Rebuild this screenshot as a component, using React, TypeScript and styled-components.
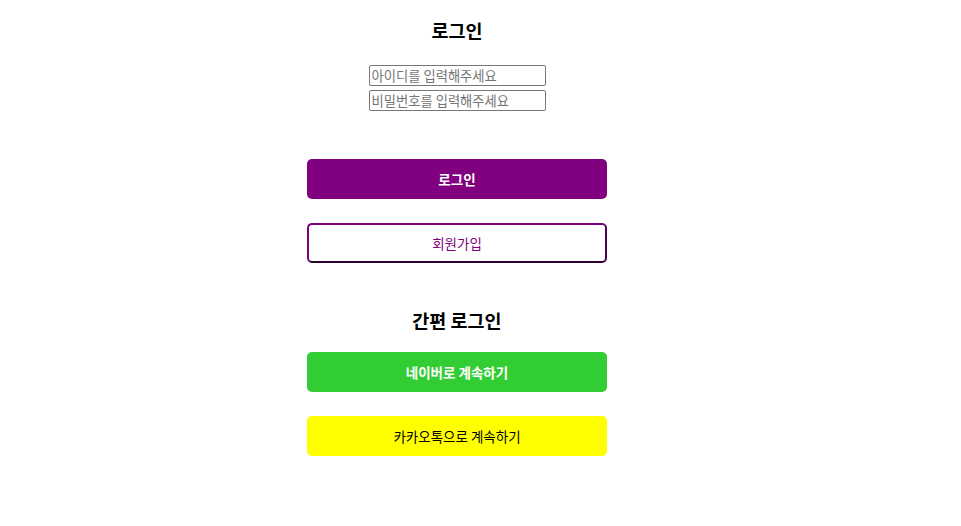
import styled, { createGlobalStyle } from "styled-components";

const GlobalStyle = createGlobalStyle`
  * { box-sizing: border-box; }
  body {
    margin: 0;
    background: #ffffff;
    font-family: "Noto Sans CJK KR", "Noto Sans", sans-serif;
  }
`;

const Page = styled.main`
  display: flex;
  flex-direction: column;
  align-items: center;
  padding-top: 17px;
  width: 914px;
`;

const Title = styled.h3<{ $top?: number }>`
  margin: ${(p) => p.$top ?? 0}px 0 0;
  height: 27px;
  line-height: 27px;
  font-size: 18.5px;
  font-weight: 700;
  color: #000;
`;

const Form = styled.form`
  display: flex;
  flex-direction: column;
  align-items: center;
  gap: 4px;
  margin-top: 21px;
`;

const Input = styled.input`
  width: 177px;
  height: 21px;
  padding: 0 2px;
  border: 1px solid #767676;
  border-radius: 2px;
  font-family: inherit;
  font-size: 13.3px;
  color: #000;
  &::placeholder { color: #757575; }
`;

const Button = styled.button<{ $bg: string; $fg: string; $top: number; $bold?: boolean; $outline?: boolean }>`
  width: 300px;
  height: 40px;
  margin-top: ${(p) => p.$top}px;
  border-radius: 5px;
  border: ${(p) => (p.$outline ? "2px solid #800080" : "none")};
  border-bottom-color: ${(p) => (p.$outline ? "#2e0033" : "transparent")};
  border-right-color: ${(p) => (p.$outline ? "#4a0050" : "transparent")};
  background: ${(p) => p.$bg};
  color: ${(p) => p.$fg};
  font-family: inherit;
  font-size: 13.5px;
  font-weight: ${(p) => (p.$bold ? 700 : 400)};
  cursor: pointer;
`;

export default function App() {
  return (
    <>
      <GlobalStyle />
      <Page>
        <Title>로그인</Title>
        <Form>
          <Input placeholder="아이디를 입력해주세요" />
          <Input type="password" placeholder="비밀번호를 입력해주세요" />
        </Form>
        <Button $bg="#800080" $fg="#ffffff" $top={48} $bold>로그인</Button>
        <Button $bg="#ffffff" $fg="#800080" $top={24} $outline>회원가입</Button>
        <Title $top={44}>간편 로그인</Title>
        <Button $bg="#32cd32" $fg="#ffffff" $top={18} $bold>네이버로 계속하기</Button>
        <Button $bg="#ffff00" $fg="#000000" $top={24}>카카오톡으로 계속하기</Button>
      </Page>
    </>
  );
}
